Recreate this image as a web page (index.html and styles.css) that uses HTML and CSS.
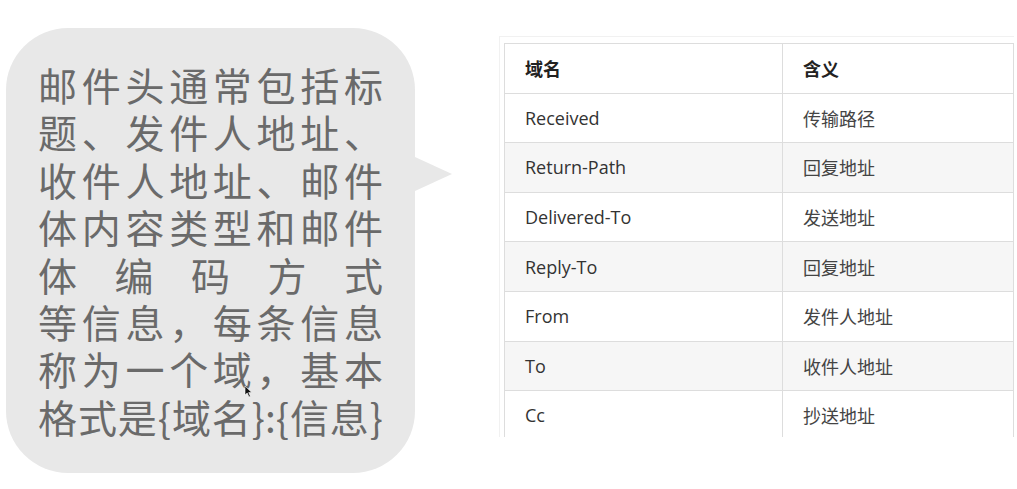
FILE: index.html
```html
<!DOCTYPE html>
<html lang="zh-CN">
<head>
<meta charset="utf-8">
<link rel="stylesheet" href="styles.css">
</head>
<body>
<div class="page">
  <div class="bubble">
    <div class="bubble-text">
      <span class="line">邮件头通常包括标</span>
      <span class="line">题、发件人地址、</span>
      <span class="line">收件人地址、邮件</span>
      <span class="line">体内容类型和邮件</span>
      <span class="line">体 编 码 方 式</span>
      <span class="line">等信息，每条信息</span>
      <span class="line">称为一个域，基本</span>
      <span class="line">格式是{域名}:{信息}</span>
    </div>
    <svg class="cursor" width="9" height="13" viewBox="0 0 9 13"><path d="M1 1 L1 10 L3.2 8 L5 12 L6.4 11.3 L4.7 7.6 L7.8 7.6 Z" fill="#111" stroke="#fff" stroke-width="0.6"/></svg>
  </div>
  <div class="table-frame">
    <div class="table-clip">
      <table class="fields">
        <thead>
          <tr><th>域名</th><th>含义</th></tr>
        </thead>
        <tbody>
          <tr><td>Received</td><td>传输路径</td></tr>
          <tr class="alt"><td>Return-Path</td><td>回复地址</td></tr>
          <tr><td>Delivered-To</td><td>发送地址</td></tr>
          <tr class="alt"><td>Reply-To</td><td>回复地址</td></tr>
          <tr><td>From</td><td>发件人地址</td></tr>
          <tr class="alt"><td>To</td><td>收件人地址</td></tr>
          <tr><td>Cc</td><td>抄送地址</td></tr>
        </tbody>
      </table>
    </div>
  </div>
</div>
</body>
</html>
```

FILE: styles.css
```css
html, body {
  margin: 0;
  padding: 0;
  background: #ffffff;
}

.page {
  width: 1017px;
  height: 489px;
  display: flex;
  align-items: flex-start;
  overflow: hidden;
}

.bubble {
  position: relative;
  margin: 28px 0 0 6px;
  width: 409px;
  height: 445px;
  box-sizing: border-box;
  padding: 33px 32px 0 32px;
  background: #e8e8e8;
  border-radius: 62px;
}

.bubble::after {
  content: "";
  position: absolute;
  left: 409px;
  top: 129px;
  width: 0;
  height: 0;
  border-top: 17px solid transparent;
  border-bottom: 17px solid transparent;
  border-left: 37px solid #e8e8e8;
}

.bubble-text {
  width: 345px;
  font-family: "Noto Sans CJK SC", "Noto Sans", sans-serif;
  font-size: 39px;
  line-height: 47.4px;
  color: #6a6a6a;
}

.line {
  display: block;
  height: 47.4px;
  overflow: visible;
  text-align: justify;
  text-align-last: justify;
  white-space: nowrap;
}

.cursor {
  position: absolute;
  left: 238px;
  top: 357px;
}

.table-frame {
  margin: 36px 0 0 84px;
  width: 515px;
  border-top: 1px solid #f1f1f1;
  border-left: 1px solid #f1f1f1;
  box-sizing: border-box;
  padding: 6px 0 0 4px;
}

.table-clip {
  width: 510px;
  height: 394px;
  overflow: hidden;
}

.fields {
  width: 510px;
  border-collapse: collapse;
  font-family: "Open Sans", "Noto Sans CJK SC", sans-serif;
  font-size: 18px;
  color: #333333;
  table-layout: fixed;
}

.fields th,
.fields td {
  height: 49.6px;
  padding: 0 0 0 20px;
  border: 1px solid #dddddd;
  text-align: left;
  vertical-align: middle;
  box-sizing: border-box;
}

.fields th:first-child,
.fields td:first-child {
  width: 278px;
}

.fields th {
  font-weight: 700;
  font-family: "Noto Sans CJK SC", sans-serif;
  color: #222222;
}

.fields td:nth-child(2) {
  font-family: "Noto Sans CJK SC", sans-serif;
  color: #444444;
}

.fields tr.alt td {
  background: #f6f6f6;
}
```
